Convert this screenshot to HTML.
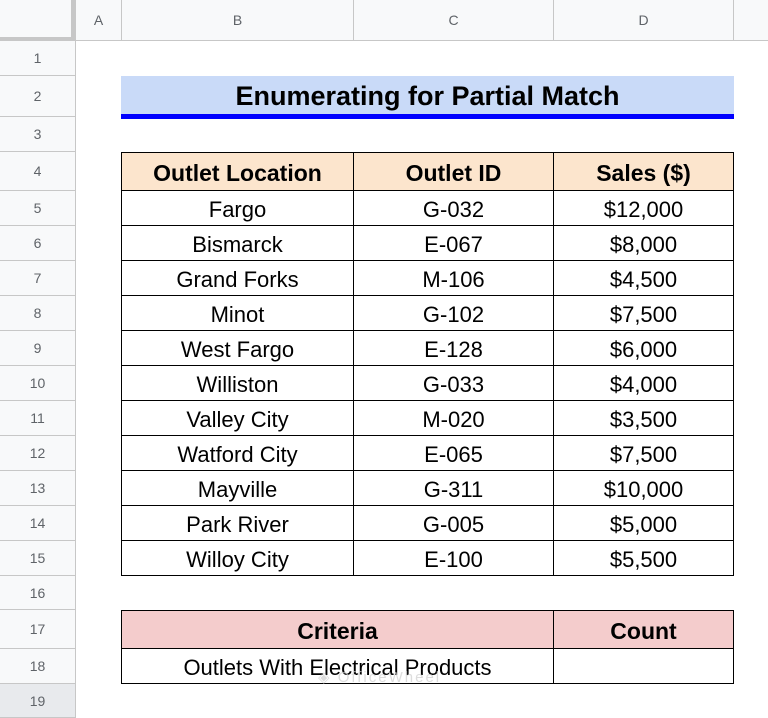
<!DOCTYPE html><html><head><style>
body{margin:0;width:768px;height:718px;overflow:hidden;background:#fff;font-family:"Liberation Sans",Arial,sans-serif;position:relative}
.a{position:absolute;box-sizing:border-box}
.ch{top:0;height:41px;background:#f8f9fa;border-right:1px solid #c7c7c7;border-bottom:1px solid #c7c7c7;color:#5f6368;font-size:14px;text-align:center;line-height:41px}
.rh{left:0;width:76px;background:#f8f9fa;border-bottom:1px solid #c7c7c7;border-right:1px solid #c7c7c7;color:#5f6368;font-size:14px;text-align:center;display:flex;align-items:center;justify-content:center}
.c{border:1px solid #000;display:flex;align-items:center;justify-content:center;font-size:22px;color:#000;margin-left:-1px;margin-top:-1px;padding-top:3px}
.h{font-weight:bold;background:#fce5cd;font-size:23px}
.p{font-weight:bold;background:#f4cccc;font-size:23px}
</style></head><body>
<div class="a ch" style="left:0;width:76px;border-right:5px solid #c7c7c7;border-bottom:4px solid #c7c7c7"></div>
<div class="a ch" style="left:76px;width:46px">A</div>
<div class="a ch" style="left:122px;width:232px">B</div>
<div class="a ch" style="left:354px;width:200px">C</div>
<div class="a ch" style="left:554px;width:180px">D</div>
<div class="a ch" style="left:734px;width:34px;border-right:none"></div>
<div class="a rh" style="top:41px;height:35px">1</div>
<div class="a rh" style="top:76px;height:41px">2</div>
<div class="a rh" style="top:117px;height:35px">3</div>
<div class="a rh" style="top:152px;height:39px">4</div>
<div class="a rh" style="top:191px;height:35px">5</div>
<div class="a rh" style="top:226px;height:35px">6</div>
<div class="a rh" style="top:261px;height:35px">7</div>
<div class="a rh" style="top:296px;height:35px">8</div>
<div class="a rh" style="top:331px;height:35px">9</div>
<div class="a rh" style="top:366px;height:35px">10</div>
<div class="a rh" style="top:401px;height:35px">11</div>
<div class="a rh" style="top:436px;height:35px">12</div>
<div class="a rh" style="top:471px;height:35px">13</div>
<div class="a rh" style="top:506px;height:35px">14</div>
<div class="a rh" style="top:541px;height:35px">15</div>
<div class="a rh" style="top:576px;height:34px">16</div>
<div class="a rh" style="top:610px;height:39px">17</div>
<div class="a rh" style="top:649px;height:35px">18</div>
<div class="a rh" style="top:684px;height:34px;background:#e8eaed">19</div>
<div class="a" style="left:121px;top:76px;width:613px;height:39px;background:#c9daf8;font-weight:bold;font-size:27px;text-align:center;line-height:41px">Enumerating for Partial Match</div>
<div class="a" style="left:121px;top:114px;width:613px;height:5px;background:#0000ff"></div>
<div class="a c h" style="left:122px;top:153px;width:233px;height:39px">Outlet Location</div>
<div class="a c h" style="left:354px;top:153px;width:201px;height:39px">Outlet ID</div>
<div class="a c h" style="left:554px;top:153px;width:181px;height:39px">Sales ($)</div>
<div id="rows"></div>
<div class="a c p" style="left:122px;top:611px;width:433px;height:39px">Criteria</div>
<div class="a c p" style="left:554px;top:611px;width:181px;height:39px">Count</div>
<div class="a c" style="left:122px;top:649px;width:433px;height:36px">Outlets With Electrical Products</div>
<div class="a c" style="left:554px;top:649px;width:181px;height:36px"></div>
<div class="a" style="left:318px;top:668px;color:#d0d0d0;font-size:15px;letter-spacing:2px;opacity:.7">◈ OfficeWheel</div>
<script>
var d=[["Fargo","G-032","$12,000"],["Bismarck","E-067","$8,000"],["Grand Forks","M-106","$4,500"],["Minot","G-102","$7,500"],["West Fargo","E-128","$6,000"],["Williston","G-033","$4,000"],["Valley City","M-020","$3,500"],["Watford City","E-065","$7,500"],["Mayville","G-311","$10,000"],["Park River","G-005","$5,000"],["Willoy City","E-100","$5,500"]];
var h="";d.forEach(function(r,i){var t=191+i*35;
h+='<div class="a c" style="left:122px;top:'+t+'px;width:233px;height:36px">'+r[0]+'</div><div class="a c" style="left:354px;top:'+t+'px;width:201px;height:36px">'+r[1]+'</div><div class="a c" style="left:554px;top:'+t+'px;width:181px;height:36px">'+r[2]+'</div>';});
document.getElementById("rows").innerHTML=h;
</script>
</body></html>
